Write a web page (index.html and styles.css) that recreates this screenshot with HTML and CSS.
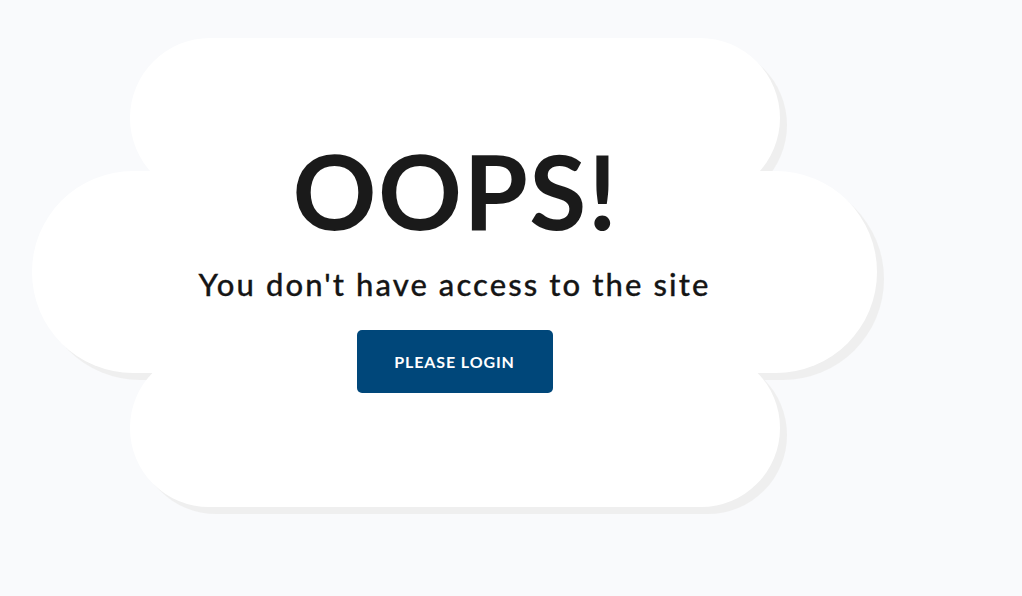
FILE: index.html
```html
<!DOCTYPE html>
<html lang="en">
<head>
<meta charset="utf-8">
<title>Oops</title>
<link rel="stylesheet" href="styles.css">
</head>
<body>
<main class="cloud">
  <div class="lobes" aria-hidden="true">
    <div class="lobe lobe-top"></div>
    <div class="lobe lobe-mid"></div>
    <div class="lobe lobe-bottom"></div>
  </div>
  <section class="content">
    <h1 class="title">OOPS!</h1>
    <p class="subtitle">You don't have access to the site</p>
    <a class="login-btn" href="#">PLEASE LOGIN</a>
  </section>
</main>
</body>
</html>
```
FILE: styles.css
```css
html, body {
  margin: 0;
  padding: 0;
}
body {
  background: #f9fafc;
  width: 1022px;
  height: 596px;
  overflow: hidden;
  font-family: "Lato", "Noto Sans", sans-serif;
}
.cloud {
  display: grid;
  width: 845px;
  margin: 38px 0 0 32px;
}
.lobes {
  grid-area: 1 / 1;
  display: grid;
  filter: drop-shadow(7px 7px 0 #efefef);
}
.lobe {
  grid-area: 1 / 1;
  background: #ffffff;
  align-self: start;
  justify-self: start;
}
.lobe-top {
  margin: 0 0 0 98px;
  width: 650px;
  height: 160px;
  border-radius: 80px;
}
.lobe-mid {
  margin-top: 133px;
  width: 845px;
  height: 202px;
  border-radius: 101px;
}
.lobe-bottom {
  margin: 311px 0 0 98px;
  width: 650px;
  height: 158px;
  border-radius: 79px;
}
.content {
  grid-area: 1 / 1;
  position: relative;
  display: flex;
  flex-direction: column;
  align-items: center;
  padding-top: 100px;
}
.title {
  margin: 0;
  font-size: 104px;
  line-height: 104px;
  font-weight: 700;
  color: #1a1a1a;
  letter-spacing: 1.5px;
  padding-left: 2px;
}
.subtitle {
  margin: 27px 0 0;
  font-size: 31px;
  line-height: 31px;
  font-weight: 500;
  color: #151515;
  letter-spacing: 2.1px;
  -webkit-text-stroke: 0.3px #151515;
}
.login-btn {
  margin-top: 30px;
  width: 196px;
  height: 63px;
  display: flex;
  align-items: center;
  justify-content: center;
  background: #00477a;
  border-radius: 5px;
  color: #ffffff;
  font-size: 16px;
  font-weight: 700;
  text-decoration: none;
  letter-spacing: 0.9px;
}
```
